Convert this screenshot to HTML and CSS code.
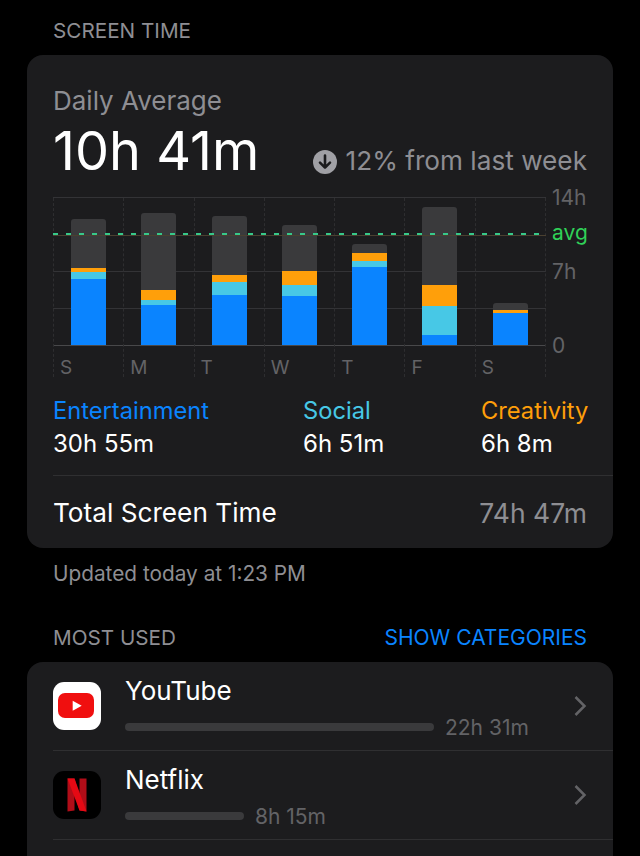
FILE: index.html
```html
<!DOCTYPE html>
<html lang="en">
<head>
    <meta charset="UTF-8">
    <title>Screen Time</title>
    <link rel="stylesheet" href="styles.css">
</head>
<body>

    <h2 class="section-title first">SCREEN TIME</h2>

    <div class="card summary">
        <p class="daily-label">Daily Average</p>
        <div class="daily-row">
            <span class="daily-value">10h 41m</span>
            <span class="trend">
                <svg class="trend-icon" viewBox="0 0 24 24" width="24" height="24">
                    <circle cx="12" cy="12" r="12" fill="#a0a0a5"/>
                    <path d="M12 5.500v12M7 12.600l5 5 5-5" fill="none" stroke="#1c1c1e" stroke-width="2.600" stroke-linecap="round" stroke-linejoin="round"/>
                </svg>
                12% from last week
            </span>
        </div>

        <div class="chart">
            <div class="plot">
                <div class="hline h2"></div>
                <div class="hline h3"></div>
                <div class="hline h4"></div>
                <div class="avg-line"></div>

                <div class="day">
                    <div class="bar" style="height:126px">
                        <div class="seg grey" style="height:49px"></div>
                        <div class="seg orange" style="height:4px"></div>
                        <div class="seg cyan" style="height:7px"></div>
                        <div class="seg blue" style="height:66px"></div>
                    </div>
                    <span class="day-label">S</span>
                </div>
                <div class="day">
                    <div class="bar" style="height:132px">
                        <div class="seg grey" style="height:77px"></div>
                        <div class="seg orange" style="height:10px"></div>
                        <div class="seg cyan" style="height:5px"></div>
                        <div class="seg blue" style="height:40px"></div>
                    </div>
                    <span class="day-label">M</span>
                </div>
                <div class="day">
                    <div class="bar" style="height:129px">
                        <div class="seg grey" style="height:59px"></div>
                        <div class="seg orange" style="height:7px"></div>
                        <div class="seg cyan" style="height:13px"></div>
                        <div class="seg blue" style="height:50px"></div>
                    </div>
                    <span class="day-label">T</span>
                </div>
                <div class="day">
                    <div class="bar" style="height:120px">
                        <div class="seg grey" style="height:46px"></div>
                        <div class="seg orange" style="height:14px"></div>
                        <div class="seg cyan" style="height:11px"></div>
                        <div class="seg blue" style="height:49px"></div>
                    </div>
                    <span class="day-label">W</span>
                </div>
                <div class="day">
                    <div class="bar" style="height:101px">
                        <div class="seg grey" style="height:9px"></div>
                        <div class="seg orange" style="height:8px"></div>
                        <div class="seg cyan" style="height:6px"></div>
                        <div class="seg blue" style="height:78px"></div>
                    </div>
                    <span class="day-label">T</span>
                </div>
                <div class="day">
                    <div class="bar" style="height:138px">
                        <div class="seg grey" style="height:78px"></div>
                        <div class="seg orange" style="height:21px"></div>
                        <div class="seg cyan" style="height:29px"></div>
                        <div class="seg blue" style="height:10px"></div>
                    </div>
                    <span class="day-label">F</span>
                </div>
                <div class="day">
                    <div class="bar" style="height:42px">
                        <div class="seg grey" style="height:7px"></div>
                        <div class="seg orange" style="height:3px"></div>
                        <div class="seg blue" style="height:32px"></div>
                    </div>
                    <span class="day-label">S</span>
                </div>
            </div>
            <div class="axis">
                <span class="tick t14">14h</span>
                <span class="tick tavg">avg</span>
                <span class="tick t7">7h</span>
                <span class="tick t0">0</span>
            </div>
        </div>

        <div class="legend">
            <div class="legend-item">
                <span class="legend-name c-blue">Entertainment</span>
                <span class="legend-value">30h 55m</span>
            </div>
            <div class="legend-item">
                <span class="legend-name c-cyan">Social</span>
                <span class="legend-value">6h 51m</span>
            </div>
            <div class="legend-item">
                <span class="legend-name c-orange">Creativity</span>
                <span class="legend-value">6h 8m</span>
            </div>
        </div>

        <div class="total">
            <span class="total-label">Total Screen Time</span>
            <span class="total-value">74h 47m</span>
        </div>
    </div>

    <p class="updated">Updated today at 1:23 PM</p>

    <div class="section-row">
        <h2 class="section-title">MOST USED</h2>
        <a class="show-link">SHOW CATEGORIES</a>
    </div>

    <div class="card apps">
        <div class="app">
            <div class="app-icon youtube">
                <svg viewBox="0 0 48 48" width="48" height="48">
                    <rect x="5" y="11" width="36" height="25" rx="7" fill="#f00f0f"/>
                    <path d="M19.700 18.700l9 5-9 5z" fill="#fff"/>
                </svg>
            </div>
            <div class="app-body">
                <div class="app-name">YouTube</div>
                <div class="usage">
                    <div class="usage-bar" style="width:309px"></div>
                    <span class="usage-time">22h 31m</span>
                </div>
            </div>
            <svg class="chevron" viewBox="0 0 14 22" width="14" height="22">
                <path d="M2.500 2l9 9-9 9" fill="none" stroke="#636366" stroke-width="2.500"/>
            </svg>
        </div>
        <div class="app">
            <div class="app-icon netflix">
                <svg viewBox="0 0 48 48" width="48" height="48">
                    <path d="M14.500 7.500h7l5 17v-17h7v33l-7-1-5-17v17l-7 1z" fill="#b00d18"/>
                    <path d="M14.500 7.500h7l12 33-7-1z" fill="#e50914"/>
                </svg>
            </div>
            <div class="app-body">
                <div class="app-name">Netflix</div>
                <div class="usage">
                    <div class="usage-bar" style="width:119px"></div>
                    <span class="usage-time">8h 15m</span>
                </div>
            </div>
            <svg class="chevron" viewBox="0 0 14 22" width="14" height="22">
                <path d="M2.500 2l9 9-9 9" fill="none" stroke="#636366" stroke-width="2.500"/>
            </svg>
        </div>
    </div>

</body>
</html>
```

FILE: styles.css
```css
html, body {
    height: 100%;
    overflow: hidden;
}
body {
    margin: 0;
    background-color: #000;
    color: #fff;
    font-family: Inter, "Liberation Sans", sans-serif;
}
.section-title {
    margin: 0;
    font-size: 20.7px;
    font-weight: 400;
    line-height: 24px;
    color: #8e8e93;
}
.section-title.first {
    padding: 19px 0 0 53px;
}
.card {
    margin: 0 27px;
    background: #1c1c1e;
    border-radius: 16px;
}
.summary {
    margin-top: 12px;
    height: 493px;
    padding: 29px 26px 0;
    box-sizing: border-box;
}
.daily-label {
    margin: 0;
    font-size: 26px;
    line-height: 34px;
    color: #8e8e93;
}
.daily-row {
    display: flex;
    justify-content: space-between;
    align-items: baseline;
    height: 64px;
    margin-top: 1px;
}
.daily-value {
    font-size: 54px;
    line-height: 64px;
}
.trend {
    font-size: 26.2px;
    color: #8e8e93;
}
.trend-icon {
    vertical-align: -4px;
    margin-right: 1px;
}

/* chart */
.chart {
    position: relative;
    margin-top: 14px;
    height: 186px;
}
.plot {
    position: relative;
    display: flex;
    width: 493px;
    height: 148px;
    border-top: 1px solid #333336;
    box-sizing: border-box;
}
.hline {
    position: absolute;
    left: 0;
    right: 0;
    height: 1px;
    background: #333336;
}
.h2 { top: 73px; }
.h3 { top: 110px; }
.h4 { top: 147px; background: #48484a; }
.avg-line {
    position: absolute;
    left: 0;
    right: 0;
    top: 35px;
    height: 2px;
    background: repeating-linear-gradient(90deg, #38c98a 0 5px, transparent 5px 13px);
    border-bottom: 1px solid #4a4030;
    z-index: 2;
}
.day {
    position: relative;
    flex: 1;
    display: flex;
    flex-direction: column;
    justify-content: flex-end;
    border-left: 1px dashed #2e2e30;
    height: 179px;
}
.day:last-of-type {
    border-right: 1px dashed #2e2e30;
}
.bar {
    display: flex;
    flex-direction: column;
    width: 35px;
    margin: 0 0 32px 17px;
    border-radius: 3px 3px 0 0;
    overflow: hidden;
    z-index: 1;
}
.day-label {
    position: absolute;
    left: 6px;
    top: 158px;
    font-size: 19px;
    line-height: 24px;
    color: #636366;
}
.seg { width: 100%; }
.grey { background: #3a3a3c; }
.orange { background: #ff9f0a; }
.cyan { background: #47c8e6; }
.blue { background: #0a84ff; }

.axis .tick {
    position: absolute;
    left: 499px;
    font-size: 21px;
    line-height: 24px;
    color: #636366;
}
.t14 { top: -11px; }
.axis .tavg { top: 24px; color: #30d158; }
.t7 { top: 63px; }
.t0 { top: 137px; }

/* legend */
.legend {
    display: grid;
    grid-template-columns: 250px 178px auto;
    margin-top: 13px;
}
.legend-item {
    display: flex;
    flex-direction: column;
    gap: 3px;
}
.legend-name {
    font-size: 23.7px;
    line-height: 30px;
    white-space: nowrap;
}
.legend-value {
    font-size: 24px;
    line-height: 30px;
    white-space: nowrap;
}
.c-blue { color: #0a84ff; }
.c-cyan { color: #47c8e6; }
.c-orange { color: #ff9f0a; }

.total {
    display: flex;
    justify-content: space-between;
    align-items: center;
    height: 73px;
    margin: 16px -26px 0 0;
    padding-right: 26px;
    border-top: 1px solid #2f2f31;
}
.total-label {
    font-size: 26.2px;
}
.total-value {
    font-size: 26.5px;
    color: #8e8e93;
}

.updated {
    margin: 13px 0 0 53px;
    font-size: 20.8px;
    line-height: 26px;
    color: #8e8e93;
}
.section-row {
    display: flex;
    justify-content: space-between;
    margin: 39px 53px 0;
}
.show-link {
    font-size: 21px;
    line-height: 24px;
    color: #0a84ff;
}

/* most used */
.apps {
    margin-top: 12px;
    height: 220px;
    padding-left: 26px;
}
.app {
    display: flex;
    align-items: center;
    height: 88px;
    border-bottom: 1px solid #2f2f31;
}
.app-icon {
    width: 48px;
    height: 48px;
    border-radius: 11px;
    overflow: hidden;
    flex: none;
}
.youtube { background: #fff; }
.netflix { background: #000; }
.app-body {
    flex: 1;
    margin-left: 24px;
    padding-top: 2px;
}
.app-name {
    font-size: 26px;
    line-height: 32px;
}
.usage {
    display: flex;
    align-items: center;
    gap: 11px;
    margin-top: 8px;
    height: 24px;
}
.usage-bar {
    height: 8px;
    border-radius: 4px;
    background: #3a3a3c;
}
.usage-time {
    font-size: 21px;
    color: #636366;
}
.chevron {
    margin-right: 26px;
}
```
